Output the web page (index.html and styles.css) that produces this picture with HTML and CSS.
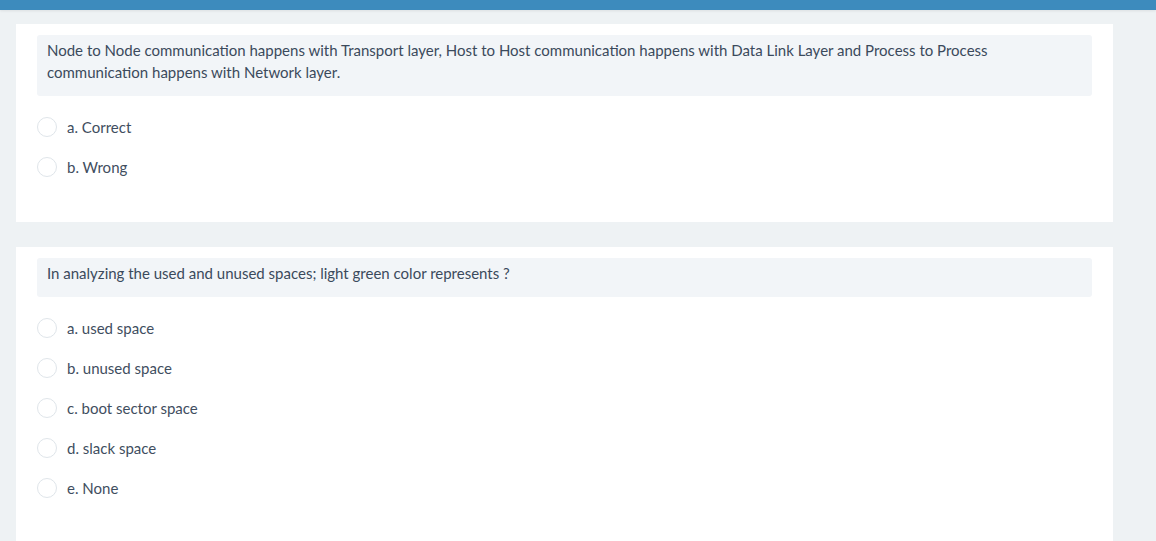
FILE: index.html
```html
<!DOCTYPE html>
<html>
<head>
<meta charset="utf-8">
<link rel="stylesheet" href="styles.css">
</head>
<body>
<div class="topbar"></div>
<main class="content">
  <section class="card">
    <div class="question">Node to Node communication happens with Transport layer, Host to Host communication happens with Data Link Layer and Process to Process communication happens with Network layer.</div>
    <div class="options">
      <label class="option"><span class="radio"></span><span class="opt-text">a. Correct</span></label>
      <label class="option"><span class="radio"></span><span class="opt-text">b. Wrong</span></label>
    </div>
  </section>
  <section class="card card-last">
    <div class="question">In analyzing the used and unused spaces; light green color represents ?</div>
    <div class="options">
      <label class="option"><span class="radio"></span><span class="opt-text">a. used space</span></label>
      <label class="option"><span class="radio"></span><span class="opt-text">b. unused space</span></label>
      <label class="option"><span class="radio"></span><span class="opt-text">c. boot sector space</span></label>
      <label class="option"><span class="radio"></span><span class="opt-text">d. slack space</span></label>
      <label class="option"><span class="radio"></span><span class="opt-text">e. None</span></label>
    </div>
  </section>
</main>
</body>
</html>
```
FILE: styles.css
```css
html, body {
  margin: 0;
  padding: 0;
}
body {
  background: #eef2f4;
  font-family: "Lato", "Noto Sans", sans-serif;
  font-size: 15px;
  color: #3e4d5e;
  overflow: hidden;
}
.topbar {
  height: 10px;
  background: #3d8bbd;
  box-shadow: 0 1px 3px rgba(0,0,0,0.08);
}
.content {
  padding: 14px 43px 0 16px;
  display: flex;
  flex-direction: column;
  gap: 25px;
}
.card {
  background: #ffffff;
  padding: 11px 21px 34px 21px;
}
.card-last {
  padding-bottom: 60px;
}
.question {
  background: #f2f5f8;
  border-radius: 3px;
  padding: 4px 10px 13px 10px;
  line-height: 22px;
  color: #3b4a5c;
}
.options {
  margin-top: 12px;
  display: flex;
  flex-direction: column;
}
.option {
  height: 40px;
  display: flex;
  align-items: center;
  gap: 10px;
}
.radio {
  width: 18px;
  height: 18px;
  border: 1px solid #dfe5ea;
  border-radius: 50%;
  background: #fff;
  flex: none;
  margin-top: -2px;
}
.opt-text {
  color: #3f4e60;
  margin-top: -3px;
}
```
